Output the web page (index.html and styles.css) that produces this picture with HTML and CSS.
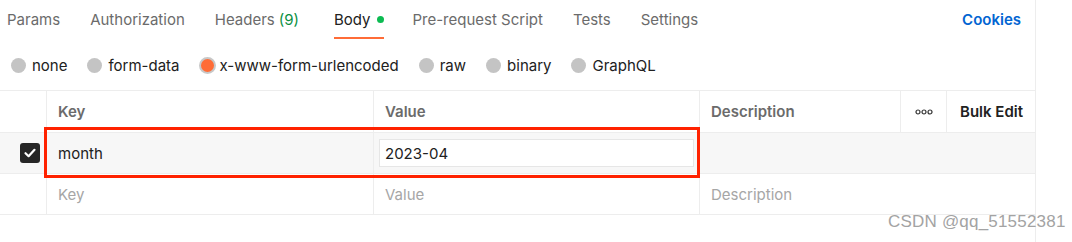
FILE: index.html
```html
<!DOCTYPE html>
<html lang="en">
<head>
    <meta charset="UTF-8">
    <meta name="viewport" content="width=device-width, initial-scale=1.0">
    <title>Request Body</title>
    <link rel="stylesheet" href="styles.css">
</head>
<body>

<div class="page">
    <!-- Request tabs -->
    <div class="tabs">
        <div class="tab-list">
            <span class="tab">Params</span>
            <span class="tab">Authorization</span>
            <span class="tab">Headers <span class="count">(9)</span></span>
            <span class="tab active">Body <span class="dot"></span></span>
            <span class="tab">Pre-request Script</span>
            <span class="tab">Tests</span>
            <span class="tab">Settings</span>
        </div>
        <span class="cookies">Cookies</span>
    </div>

    <!-- Body type -->
    <div class="body-types">
        <label class="radio"><span class="circle"></span>none</label>
        <label class="radio"><span class="circle"></span>form-data</label>
        <label class="radio"><span class="circle checked"></span>x-www-form-urlencoded</label>
        <label class="radio"><span class="circle"></span>raw</label>
        <label class="radio"><span class="circle"></span>binary</label>
        <label class="radio"><span class="circle"></span>GraphQL</label>
    </div>

    <!-- Key / value table -->
    <div class="table-wrap">
        <div class="kv-table">
            <div class="row head">
                <div class="cell check-cell"></div>
                <div class="cell">Key</div>
                <div class="cell">Value</div>
                <div class="cell">Description</div>
                <div class="cell more">
                    <svg width="18" height="6" viewBox="0 0 18 6">
                        <circle cx="3" cy="3" r="2" fill="none" stroke="#333" stroke-width="1.2"/>
                        <circle cx="9" cy="3" r="2" fill="none" stroke="#333" stroke-width="1.2"/>
                        <circle cx="15" cy="3" r="2" fill="none" stroke="#333" stroke-width="1.2"/>
                    </svg>
                </div>
                <div class="cell bulk">Bulk Edit</div>
            </div>

            <div class="row filled">
                <div class="cell check-cell">
                    <span class="checkbox">
                        <svg width="14" height="14" viewBox="0 0 14 14">
                            <path d="M2.5 7.2 L5.6 10.2 L11.5 3.8" fill="none" stroke="#fff" stroke-width="2.2" stroke-linecap="round" stroke-linejoin="round"/>
                        </svg>
                    </span>
                </div>
                <div class="cell">month</div>
                <div class="cell value-cell"><div class="value-input">2023-04</div></div>
                <div class="cell"></div>
                <div class="cell no-line"></div>
                <div class="cell no-line"></div>
            </div>

            <div class="row">
                <div class="cell check-cell"></div>
                <div class="cell placeholder">Key</div>
                <div class="cell placeholder">Value</div>
                <div class="cell placeholder">Description</div>
                <div class="cell no-line"></div>
                <div class="cell no-line"></div>
            </div>
        </div>

        <div class="highlight"></div>
    </div>
</div>

<div class="watermark">CSDN @qq_51552381</div>

</body>
</html>
```

FILE: styles.css
```css
body {
    font-family: 'Inter', 'Noto Sans', sans-serif;
    font-size: 15px;
    color: #212121;
    background: #fff;
    margin: 0;
    overflow: hidden;
}

.page {
    width: 1035px;
    height: 242px;
    border-right: 1px solid #ededed;
}

/* tabs */
.tabs {
    display: flex;
    justify-content: space-between;
    align-items: flex-start;
    height: 40px;
    padding: 0 14px 0 7px;
}

.tab-list {
    display: flex;
    gap: 30px;
}

.tab {
    display: flex;
    align-items: center;
    height: 39px;
    padding-top: 1px;
    color: #6b6b6b;
    box-sizing: border-box;
    border-bottom: 2px solid transparent;
}

.tab .count {
    color: #0c8f43;
    margin-left: 4px;
}

.tab.active {
    color: #212121;
    border-bottom-color: #ff6c37;
    margin-left: 5px;
    margin-right: -2px;
}

.dot {
    width: 7px;
    height: 7px;
    border-radius: 50%;
    background: #0cbb52;
    margin-left: 7px;
}

.cookies {
    color: #0265d2;
    font-weight: 600;
    line-height: 40px;
}

/* body type radios */
.body-types {
    display: flex;
    align-items: center;
    height: 50px;
    padding-left: 11px;
    gap: 20px;
}

.radio {
    display: flex;
    align-items: center;
    gap: 6px;
}

.circle {
    width: 15px;
    height: 15px;
    border-radius: 50%;
    background: #c4c4c4;
    box-sizing: border-box;
}

.circle.checked {
    width: 17px;
    height: 17px;
    margin-left: -1px;
    margin-right: -2px;
    background: #ff6c37;
    border: 2.5px solid #c8c8c8;
}

/* table */
.table-wrap {
    position: relative;
}

.kv-table {
    border-top: 1px solid #ededed;
}

.row {
    display: grid;
    grid-template-columns: 46px 327px 326px 201px 46px 89px;
    height: 41px;
    box-sizing: border-box;
    border-bottom: 1px solid #ededed;
}

.row.head {
    height: 42px;
}

.row.filled {
    background: #f7f7f7;
}

.cell {
    display: flex;
    align-items: center;
    padding-left: 11px;
    border-left: 1px solid #ededed;
    box-sizing: border-box;
    white-space: nowrap;
}

.cell.check-cell {
    border-left: none;
    padding-left: 20px;
}

.cell.no-line {
    border-left-color: transparent;
}

.head .cell {
    color: #6b6b6b;
    font-weight: 600;
}

.head .cell.more {
    justify-content: center;
    padding-left: 0;
}

.head .cell.bulk {
    color: #212121;
    padding-left: 13px;
}

.checkbox {
    display: flex;
    align-items: center;
    justify-content: center;
    width: 20px;
    height: 20px;
    border-radius: 3px;
    background: #262626;
}

.value-cell {
    padding: 0 5px;
}

.value-input {
    flex: 1;
    height: 28px;
    line-height: 28px;
    padding-left: 5px;
    background: #fff;
    border: 1px solid #e6e6e6;
    box-sizing: border-box;
}

.placeholder {
    color: #a6a6a6;
}

.highlight {
    position: absolute;
    left: 44px;
    top: 37px;
    width: 656px;
    height: 51px;
    border: 3px solid #ff2200;
    box-sizing: border-box;
}

.watermark {
    position: absolute;
    left: 888px;
    top: 212px;
    font-family: 'Liberation Sans', Arial, sans-serif;
    font-size: 17px;
    color: #a3a3a3;
    letter-spacing: 0.2px;
}
```
